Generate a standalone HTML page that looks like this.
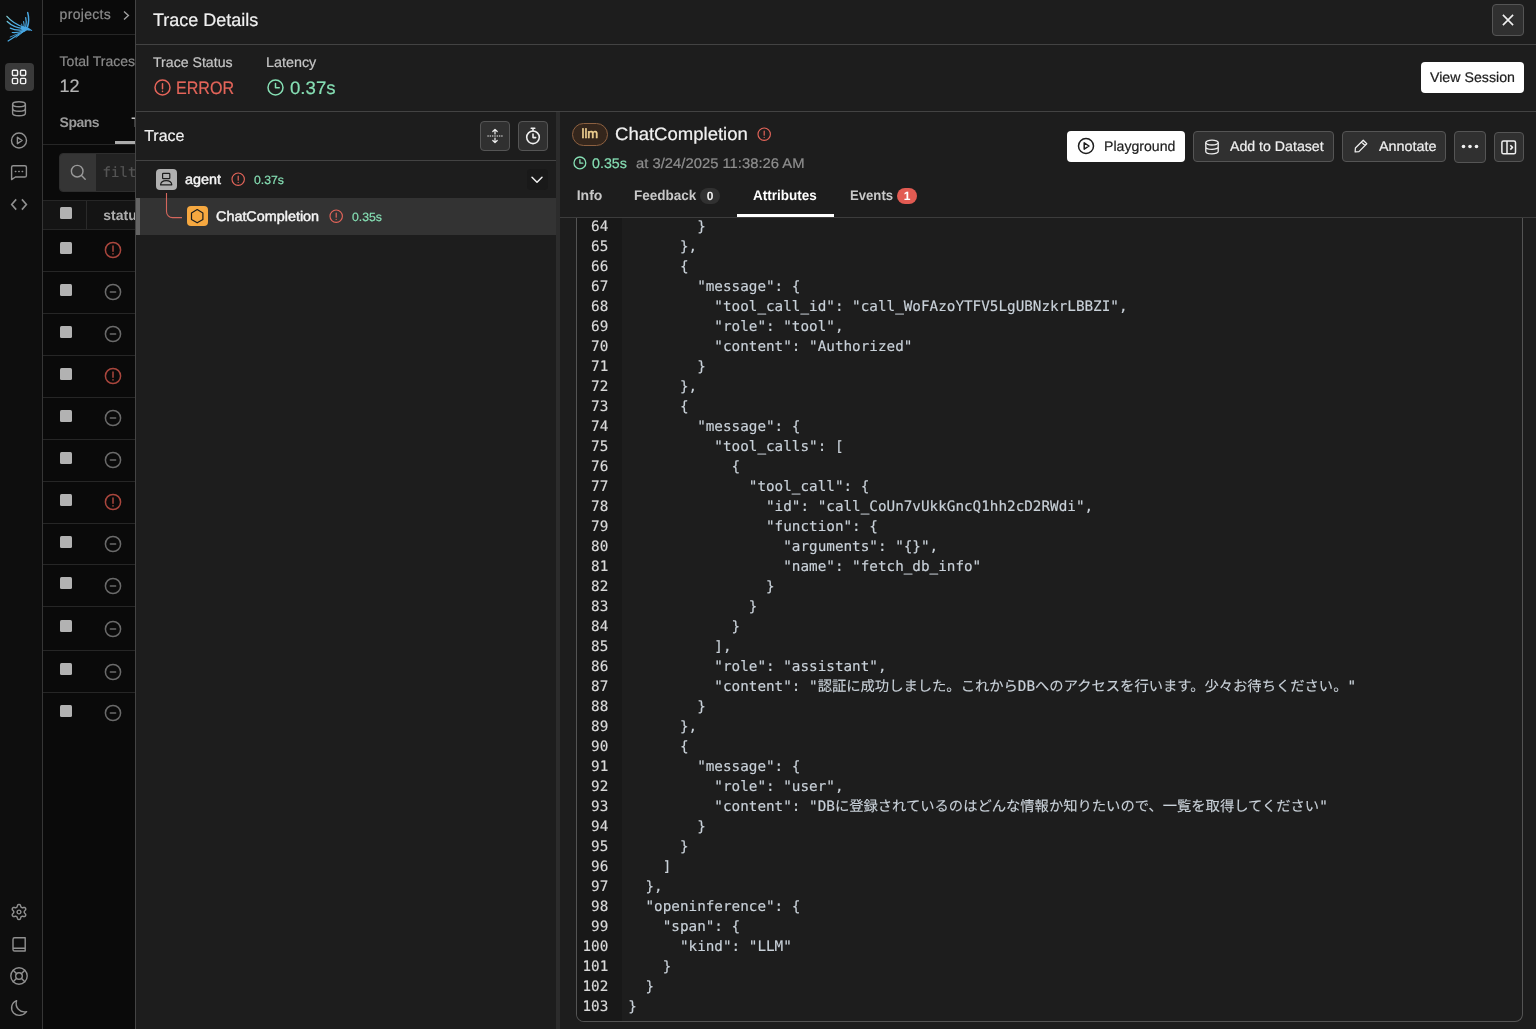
<!DOCTYPE html>
<html lang="en">
<head>
<meta charset="utf-8">
<title>Trace Details</title>
<style>
*{box-sizing:border-box;margin:0;padding:0}
html,body{width:1536px;height:1029px;overflow:hidden;background:#0a0a0a}
#main,#panel{will-change:transform}
body{text-rendering:geometricPrecision;position:relative;font-family:"Liberation Sans",sans-serif;font-size:14px;color:#eee;-webkit-font-smoothing:antialiased}
.abs{position:absolute}
.t{position:absolute;white-space:nowrap;line-height:1;-webkit-text-stroke:0.2px}
svg{position:absolute;overflow:visible}
/* sidebar */
#side{left:0;top:0;width:43px;height:1029px;background:#0e0e0e;border-right:1px solid #363636}
#navsel{left:5px;top:63px;width:29px;height:28px;border-radius:4px;background:#3a3a3a}
/* main dimmed */
#main{left:43px;top:0;width:92px;height:1029px;background:#0a0a0a;overflow:hidden}
.hl{position:absolute;height:1px;background:#262626}
.cb{position:absolute;left:17px;width:12px;height:12px;border-radius:1.5px;background:#b2b2b2}
/* panel */
#panel{left:135px;top:0;width:1401px;height:1029px;background:#1d1d1d;border-left:1px solid #444}
.pl{position:absolute;height:1px;background:#434343}
.btn{position:absolute;border:1px solid #555;background:#303030;border-radius:4px}
.btnw{position:absolute;background:#fff;border-radius:4px}
.mono{text-rendering:geometricPrecision;font-family:"DejaVu Sans Mono","Liberation Mono","Noto Sans CJK JP",monospace}
.cj{-webkit-text-stroke:0.12px;font-size:14.3px;letter-spacing:0}
</style>
</head>
<body>
<!-- SIDEBAR -->
<div id="side" class="abs"></div>
<div id="navsel" class="abs"></div>
<svg id="logo" style="left:0;top:0" width="43" height="50" viewBox="0 0 43 50">
<defs><linearGradient id="lg" x1="6" y1="14" x2="32" y2="34" gradientUnits="userSpaceOnUse"><stop offset="0" stop-color="#8fd6cf"/><stop offset=".35" stop-color="#4fb0e6"/><stop offset="1" stop-color="#3f9fe0"/></linearGradient></defs>
<g fill="none" stroke="url(#lg)" stroke-linecap="round">
<path d="M6.9 16.3Q13 23.4 23.4 27" stroke-width="1.25"/>
<path d="M7.2 21.5Q13 27.2 23 28.7" stroke-width="1.25"/>
<path d="M10.3 28.1Q15.6 30.8 23 29.9" stroke-width="1.2"/>
<path d="M12.2 32.5Q17 33 23 30.9" stroke-width="1.1"/>
<path d="M27.7 12.6Q29.7 19.6 27.5 27" stroke-width="1.5"/>
<path d="M25.7 17.6Q26.9 22.2 25.7 27.2" stroke-width="1.25"/>
<path d="M23.6 21.6Q24.5 24.6 23.8 27.4" stroke-width="1.1"/>
<path d="M21.7 24.1Q22.4 25.8 22 27.5" stroke-width="0.9"/>
<path d="M24.6 30.6L8.1 41" stroke-width="1.2"/>
<path d="M20 32.8L10.2 37" stroke-width="0.8"/>
<path d="M22.6 32.4L16 37.4" stroke-width="0.9"/>
</g>
<g fill="url(#lg)" stroke="none">
<path d="M21.6 26.6C24.5 26 27.6 26.8 29.6 28.4L32.4 30.5L31.4 30.9L29.8 30.2L29.2 31L28 30.2C26.5 30.4 25.4 31 24.2 32L21 33L22.6 30.6L20.5 28.8Z"/>
</g></svg>
<svg style="left:0;top:56px" width="43" height="170" viewBox="0 56 43 170" fill="none" stroke-linecap="round" stroke-linejoin="round">
<g stroke="#f2f2f2" stroke-width="1.4">
<rect x="12.4" y="70.3" width="5.2" height="5.2" rx="1"/><rect x="20.5" y="70.3" width="5.2" height="5.2" rx="1"/>
<rect x="12.4" y="78.4" width="5.2" height="5.2" rx="1"/><rect x="20.5" y="78.4" width="5.2" height="5.2" rx="1"/>
</g>
<g stroke="#909090" stroke-width="1.4">
<ellipse cx="19" cy="104.3" rx="6.4" ry="2.5"/>
<path d="M12.6 104.3V113.3C12.6 114.7 15.4 115.8 19 115.8S25.4 114.7 25.4 113.3V104.3"/>
<path d="M12.6 108.8C12.6 110.2 15.4 111.3 19 111.3S25.4 110.2 25.4 108.8"/>
<circle cx="19" cy="140.5" r="7.5"/>
<path d="M17.4 137.3L22.1 140.5L17.4 143.7Z"/>
<path d="M13.2 165.7H24.8A1.6 1.6 0 0 1 26.4 167.3V175.4A1.6 1.6 0 0 1 24.8 177H15.4L11.6 179.6V167.3A1.6 1.6 0 0 1 13.2 165.7Z"/>
<path d="M15.3 171.5H15.9M18.7 171.5H19.3M22.1 171.5H22.7" stroke-width="1.3"/>
<path d="M16.2 199.4L11.7 204.5L16.2 209.6M21.9 199.4L26.4 204.5L21.9 209.6" stroke-width="1.6" stroke-linecap="butt" stroke-linejoin="miter"/>
</g></svg>
<svg style="left:0;top:896px" width="43" height="133" viewBox="0 896 43 133" fill="none" stroke="#909090" stroke-width="1.4" stroke-linecap="round" stroke-linejoin="round">
<g transform="translate(19 912)"><path d="M0.00 -7.55 L0.49 -7.48 L0.96 -7.26 L1.37 -6.89 L1.64 -6.13 L1.82 -5.37 L2.06 -4.97 L2.30 -4.67 L2.57 -4.46 L2.89 -4.33 L3.27 -4.26 L3.74 -4.27 L4.49 -4.49 L5.28 -4.63 L5.81 -4.46 L6.23 -4.16 L6.54 -3.78 L6.72 -3.31 L6.77 -2.80 L6.65 -2.26 L6.13 -1.64 L5.57 -1.11 L5.33 -0.70 L5.19 -0.34 L5.15 -0.00 L5.19 0.34 L5.33 0.70 L5.57 1.11 L6.13 1.64 L6.65 2.26 L6.77 2.80 L6.72 3.31 L6.54 3.77 L6.23 4.16 L5.81 4.46 L5.28 4.63 L4.49 4.49 L3.74 4.27 L3.27 4.26 L2.89 4.33 L2.57 4.46 L2.30 4.67 L2.06 4.97 L1.82 5.37 L1.64 6.13 L1.37 6.89 L0.96 7.26 L0.49 7.48 L0.00 7.55 L-0.49 7.48 L-0.96 7.26 L-1.37 6.89 L-1.64 6.13 L-1.82 5.37 L-2.06 4.97 L-2.30 4.67 L-2.57 4.46 L-2.89 4.33 L-3.27 4.26 L-3.74 4.27 L-4.49 4.49 L-5.28 4.63 L-5.81 4.46 L-6.23 4.16 L-6.54 3.78 L-6.72 3.31 L-6.77 2.80 L-6.65 2.26 L-6.13 1.64 L-5.57 1.11 L-5.33 0.70 L-5.19 0.34 L-5.15 0.00 L-5.19 -0.34 L-5.33 -0.70 L-5.57 -1.11 L-6.13 -1.64 L-6.65 -2.26 L-6.77 -2.80 L-6.72 -3.31 L-6.54 -3.78 L-6.23 -4.16 L-5.81 -4.46 L-5.28 -4.63 L-4.49 -4.49 L-3.74 -4.27 L-3.27 -4.26 L-2.89 -4.33 L-2.58 -4.46 L-2.30 -4.67 L-2.06 -4.97 L-1.82 -5.37 L-1.64 -6.13 L-1.37 -6.89 L-0.96 -7.26 L-0.49 -7.48Z"/><circle r="1.9"/></g>
<path d="M14.6 937.8H25.2V951H14.6A1.6 1.6 0 0 1 13 949.4V939.4A1.6 1.6 0 0 1 14.6 937.8ZM13 948.2H25.2"/>
<circle cx="19" cy="976" r="8.2"/><circle cx="19" cy="976" r="3.3"/>
<path d="M13.2 970.2L16.7 973.7M24.8 970.2L21.3 973.7M13.2 981.8L16.7 978.3M24.8 981.8L21.3 978.3"/>
<path d="M16.6 1000.6C11.4 1002.6 10 1009 13.6 1013C17 1016.6 23.2 1016 26.6 1011.6C20 1013.2 14.6 1007.6 16.6 1000.6Z"/>
</svg>
<!-- MAIN -->
<div id="main" class="abs">
<span class="t" id="m_proj" style="left:16.6px;top:7.2px;font-size:14px;color:#8c8c8c;letter-spacing:0.3px">projects</span>
<svg style="left:79.5px;top:10.5px" width="7" height="9" viewBox="0 0 7 9" fill="none" stroke="#a0a0a0" stroke-width="1.4"><path d="M1 0.6L5.4 4.5L1 8.4"/></svg>
<div class="hl" style="left:0;top:34px;width:92px"></div>
<span class="t" id="m_tt" style="left:16.6px;top:54px;font-size:14px;color:#8a8a8a">Total Traces</span>
<span class="t" id="m_12" style="left:16.6px;top:77px;font-size:18px;color:#b4b4b4">12</span>
<span class="t" id="m_spans" style="left:16.6px;top:115.1px;font-size:14px;font-weight:700;color:#9a9a9a;letter-spacing:-0.5px;-webkit-text-stroke:0">Spans</span>
<span class="t" id="m_traces" style="left:88.4px;top:115.1px;font-size:14px;font-weight:700;color:#c4c4c4;-webkit-text-stroke:0">Traces</span>
<div class="abs" style="left:72px;top:141px;width:30px;height:3px;background:#ababab"></div>
<div class="hl" style="left:0;top:144px;width:92px"></div>
<div class="abs" style="left:16px;top:153px;width:120px;height:39px;border-radius:4px;background:#222;overflow:hidden;border:1px solid #2e2e2e"><div class="abs" style="left:-1px;top:-1px;width:36.6px;height:39px;background:#353535"></div></div>
<svg style="left:27px;top:164px" width="17" height="17" viewBox="0 0 17 17" fill="none" stroke="#9a9a9a" stroke-width="1.4" stroke-linecap="round"><circle cx="7.2" cy="7.2" r="5.8"/><path d="M11.5 11.5L15.2 15.2"/></svg>
<span class="t mono" id="m_filt" style="left:59.6px;top:166px;font-size:14px;color:#555">filter condition</span>
<div class="hl" style="left:0;top:200px;width:92px"></div>
<div class="abs" style="left:0;top:201px;width:92px;height:28px;background:#141414"></div>
<div class="abs" style="left:43px;top:201px;width:1px;height:28px;background:#2a2a2a"></div>
<div class="hl" style="left:0;top:229px;width:92px"></div>
<div class="cb" style="top:207px"></div>
<span class="t" id="m_status" style="left:60.3px;top:208.3px;font-size:14px;font-weight:700;color:#adadad;-webkit-text-stroke:0">status</span>
<div class="cb" style="top:242.2px"></div><svg style="left:61.1px;top:241.3px" width="18" height="18" viewBox="-9 -9 18 18" fill="none" stroke="#a9463d" stroke-width="1.5" stroke-linecap="round"><circle r="7.6"/><path d="M0 -3.9V1.3M0 3.8V3.9"/></svg><div class="hl" style="left:0;top:271px;width:92px"></div>
<div class="cb" style="top:284.1px"></div><svg style="left:61.1px;top:283.2px" width="18" height="18" viewBox="-9 -9 18 18" fill="none" stroke="#6a6a6a" stroke-width="1.5" stroke-linecap="round"><circle r="7.6"/><path d="M-2.7 0H2.7" stroke-width="1.3"/></svg><div class="hl" style="left:0;top:313px;width:92px"></div>
<div class="cb" style="top:326.0px"></div><svg style="left:61.1px;top:325.1px" width="18" height="18" viewBox="-9 -9 18 18" fill="none" stroke="#6a6a6a" stroke-width="1.5" stroke-linecap="round"><circle r="7.6"/><path d="M-2.7 0H2.7" stroke-width="1.3"/></svg><div class="hl" style="left:0;top:355px;width:92px"></div>
<div class="cb" style="top:367.9px"></div><svg style="left:61.1px;top:367.0px" width="18" height="18" viewBox="-9 -9 18 18" fill="none" stroke="#a9463d" stroke-width="1.5" stroke-linecap="round"><circle r="7.6"/><path d="M0 -3.9V1.3M0 3.8V3.9"/></svg><div class="hl" style="left:0;top:397px;width:92px"></div>
<div class="cb" style="top:409.8px"></div><svg style="left:61.1px;top:408.9px" width="18" height="18" viewBox="-9 -9 18 18" fill="none" stroke="#6a6a6a" stroke-width="1.5" stroke-linecap="round"><circle r="7.6"/><path d="M-2.7 0H2.7" stroke-width="1.3"/></svg><div class="hl" style="left:0;top:439px;width:92px"></div>
<div class="cb" style="top:451.7px"></div><svg style="left:61.1px;top:450.8px" width="18" height="18" viewBox="-9 -9 18 18" fill="none" stroke="#6a6a6a" stroke-width="1.5" stroke-linecap="round"><circle r="7.6"/><path d="M-2.7 0H2.7" stroke-width="1.3"/></svg><div class="hl" style="left:0;top:481px;width:92px"></div>
<div class="cb" style="top:493.6px"></div><svg style="left:61.1px;top:492.7px" width="18" height="18" viewBox="-9 -9 18 18" fill="none" stroke="#a9463d" stroke-width="1.5" stroke-linecap="round"><circle r="7.6"/><path d="M0 -3.9V1.3M0 3.8V3.9"/></svg><div class="hl" style="left:0;top:523px;width:92px"></div>
<div class="cb" style="top:535.5px"></div><svg style="left:61.1px;top:534.6px" width="18" height="18" viewBox="-9 -9 18 18" fill="none" stroke="#6a6a6a" stroke-width="1.5" stroke-linecap="round"><circle r="7.6"/><path d="M-2.7 0H2.7" stroke-width="1.3"/></svg><div class="hl" style="left:0;top:564px;width:92px"></div>
<div class="cb" style="top:577.4px"></div><svg style="left:61.1px;top:576.5px" width="18" height="18" viewBox="-9 -9 18 18" fill="none" stroke="#6a6a6a" stroke-width="1.5" stroke-linecap="round"><circle r="7.6"/><path d="M-2.7 0H2.7" stroke-width="1.3"/></svg><div class="hl" style="left:0;top:606px;width:92px"></div>
<div class="cb" style="top:620.3px"></div><svg style="left:61.1px;top:619.5px" width="18" height="18" viewBox="-9 -9 18 18" fill="none" stroke="#6a6a6a" stroke-width="1.5" stroke-linecap="round"><circle r="7.6"/><path d="M-2.7 0H2.7" stroke-width="1.3"/></svg><div class="hl" style="left:0;top:650px;width:92px"></div>
<div class="cb" style="top:663.4px"></div><svg style="left:61.1px;top:662.5px" width="18" height="18" viewBox="-9 -9 18 18" fill="none" stroke="#6a6a6a" stroke-width="1.5" stroke-linecap="round"><circle r="7.6"/><path d="M-2.7 0H2.7" stroke-width="1.3"/></svg><div class="hl" style="left:0;top:692px;width:92px"></div>
<div class="cb" style="top:705.3px"></div><svg style="left:61.1px;top:704.4px" width="18" height="18" viewBox="-9 -9 18 18" fill="none" stroke="#6a6a6a" stroke-width="1.5" stroke-linecap="round"><circle r="7.6"/><path d="M-2.7 0H2.7" stroke-width="1.3"/></svg>
</div>
<!-- PANEL -->
<div id="panel" class="abs">
<span class="t" id="p_title" style="left:17.0px;top:10.9px;font-size:18px;color:#f0f0f0;">Trace Details</span>
<div class="btn" style="left:1356px;top:4px;width:32px;height:32px"></div>
<svg style="left:1366px;top:14px" width="12" height="12" viewBox="0 0 12 12" fill="none" stroke="#f0f0f0" stroke-width="1.6"><path d="M0.9 0.9L11.1 11.1M11.1 0.9L0.9 11.1"/></svg>
<div class="pl" style="left:0;top:44px;width:1400px"></div>
<span class="t" id="p_ts" style="left:17.0px;top:55.2px;font-size:14px;color:#c6c6c6;transform:scaleX(1.009);transform-origin:0 0;">Trace Status</span>
<svg style="left:16.6px;top:78.3px" width="19.0" height="19.0" viewBox="-9.5 -9.5 19.0 19.0" fill="none" stroke="#e5655a" stroke-width="1.5" stroke-linecap="round"><circle r="7.5"/><path d="M0 -3.75V1.28M0 3.75V3.90"/></svg>
<span class="t" id="p_error" style="left:39.6px;top:78.9px;font-size:18px;color:#e5655a;transform:scaleX(0.894);transform-origin:0 0;">ERROR</span>
<span class="t" id="p_lat" style="left:129.8px;top:55.2px;font-size:14px;color:#c6c6c6;transform:scaleX(1.025);transform-origin:0 0;">Latency</span>
<svg style="left:130.0px;top:78.3px" width="19.0" height="19.0" viewBox="-9.5 -9.5 19.0 19.0" fill="none" stroke="#86dfb4" stroke-width="1.5" stroke-linecap="round" stroke-linejoin="round"><circle r="7.5"/><path d="M0 -4.12V0.3H3.75"/></svg>
<span class="t" id="p_037" style="left:154.1px;top:78.9px;font-size:18px;color:#86dfb4;transform:scaleX(1.035);transform-origin:0 0;">0.37s</span>
<div class="btnw" style="left:1284.5px;top:62.2px;width:103.3px;height:30.6px"></div>
<span class="t" id="p_vs" style="left:1294.0px;top:70.3px;font-size:14px;color:#1d1d1d;transform:scaleX(1.014);transform-origin:0 0;">View Session</span>
<div class="pl" style="left:0;top:111px;width:1400px"></div>
<span class="t" id="p_trace" style="left:8.2px;top:129.0px;font-size:16px;color:#f0f0f0;">Trace</span>
<div class="btn" style="left:344px;top:121px;width:30px;height:30px"></div>
<div class="btn" style="left:382px;top:121px;width:30px;height:30px"></div>
<svg style="left:351px;top:128px" width="16" height="16" viewBox="0 0 16 16" fill="none" stroke="#f0f0f0" stroke-width="1.2" stroke-linecap="round" stroke-linejoin="round"><path d="M8 1.6V5.9M5.8 3.5L8 1.3L10.2 3.5M8 14.4V10.1M5.8 12.5L8 14.7L10.2 12.5"/><path d="M0.4 8H15.8" stroke-dasharray="1.4 0.9" stroke-linecap="butt"/></svg>
<svg style="left:389px;top:126.6px" width="16" height="18" viewBox="0 0 16 18" fill="none" stroke="#f0f0f0" stroke-width="1.55" stroke-linecap="round" stroke-linejoin="round"><circle cx="8" cy="10.3" r="6.3"/><path d="M8 7V10.6H10.7M6.2 1.2H9.8M8 1.4V3.8"/></svg>
<div class="pl" style="left:0;top:160px;width:420px"></div>
<div class="abs" style="left:0;top:198px;width:420px;height:37px;background:#333"></div>
<div class="abs" style="left:0;top:198px;width:4px;height:37px;background:#646464"></div>
<svg style="left:25px;top:190px" width="24" height="32" viewBox="0 0 24 32" fill="none" stroke="#d4665c" stroke-width="1.1"><path d="M5.5 3V21.6A6 6 0 0 0 11.5 27.6H21"/></svg>
<div class="abs" style="left:20.3px;top:169.3px;width:20.4px;height:20.4px;border-radius:4px;background:#b0b0b0"></div>
<svg style="left:20.3px;top:169.3px" width="20.4" height="20.4" viewBox="0 0 20.4 20.4" fill="none" stroke="#1d1d1d" stroke-width="1.2" stroke-linejoin="round"><rect x="6.6" y="4.3" width="7.2" height="5.4" rx="0.8"/><path d="M4.6 15.9C4.8 13 7 11.6 10.2 11.6S15.6 13 15.8 15.9Z"/></svg>
<span class="t" id="t_agent" style="left:49.0px;top:171.8px;font-size:14px;color:#f4f4f4;transform:scaleX(1.025);transform-origin:0 0;-webkit-text-stroke:0.45px #f4f4f4">agent</span>
<svg style="left:93.7px;top:171.1px" width="16.4" height="16.4" viewBox="-8.2 -8.2 16.4 16.4" fill="none" stroke="#e5655a" stroke-width="1.15" stroke-linecap="round"><circle r="6.2"/><path d="M0 -3.10V1.05M0 3.10V3.22"/></svg>
<span class="t" id="t_037" style="left:118.2px;top:174.1px;font-size:12px;color:#86dfb4;transform:scaleX(1.021);transform-origin:0 0;">0.37s</span>
<div class="abs" style="left:390.8px;top:169px;width:21px;height:21px;border-radius:4px;background:#191919"></div>
<svg style="left:395.3px;top:175.5px" width="12" height="8" viewBox="0 0 12 8" fill="none" stroke="#f0f0f0" stroke-width="1.5" stroke-linecap="round" stroke-linejoin="round"><path d="M1 1.3L6 6.2L11 1.3"/></svg>
<div class="abs" style="left:51.2px;top:206px;width:20.4px;height:20.4px;border-radius:4px;background:#f6a840"></div>
<svg style="left:51.2px;top:206px" width="20.4" height="20.4" viewBox="0 0 20.4 20.4" fill="none" stroke="#1d1d1d" stroke-width="1.2" stroke-linejoin="round"><path d="M10.2 3.6L15.9 6.9V13.5L10.2 16.8L4.5 13.5V6.9Z"/></svg>
<span class="t" id="t_cc" style="left:79.6px;top:208.8px;font-size:14px;color:#f4f4f4;transform:scaleX(1.027);transform-origin:0 0;-webkit-text-stroke:0.45px #f4f4f4">ChatCompletion</span>
<svg style="left:191.7px;top:207.8px" width="16.4" height="16.4" viewBox="-8.2 -8.2 16.4 16.4" fill="none" stroke="#e5655a" stroke-width="1.15" stroke-linecap="round"><circle r="6.2"/><path d="M0 -3.10V1.05M0 3.10V3.22"/></svg>
<span class="t" id="t_035" style="left:216.2px;top:210.8px;font-size:12px;color:#86dfb4;transform:scaleX(1.021);transform-origin:0 0;">0.35s</span>
<div class="abs" style="left:420px;top:112px;width:4px;height:917px;background:#2c2c2c"></div>
<!-- RIGHT -->
<div class="abs" style="left:436px;top:123px;width:36px;height:23px;border-radius:12px;border:1px solid #8c6040;background:#34261c"></div>
<span class="t" id="r_llm" style="left:445.6px;top:126.8px;font-size:13px;color:#f0d192;transform:scaleX(1.0);transform-origin:0 0;-webkit-text-stroke:0.5px #f0d192">llm</span>
<span class="t" id="r_title" style="left:479.2px;top:125.0px;font-size:18px;color:#f0f0f0;transform:scaleX(1.029);transform-origin:0 0;">ChatCompletion</span>
<svg style="left:620.2px;top:126.2px" width="16.4" height="16.4" viewBox="-8.2 -8.2 16.4 16.4" fill="none" stroke="#e5655a" stroke-width="1.15" stroke-linecap="round"><circle r="6.2"/><path d="M0 -3.10V1.05M0 3.10V3.22"/></svg>
<svg style="left:436.3px;top:155.3px" width="15.8" height="15.8" viewBox="-7.9 -7.9 15.8 15.8" fill="none" stroke="#86dfb4" stroke-width="1.3" stroke-linecap="round" stroke-linejoin="round"><circle r="5.9"/><path d="M0 -3.25V0.3H2.95"/></svg>
<span class="t" id="r_035" style="left:456.1px;top:155.9px;font-size:14px;color:#86dfb4;transform:scaleX(1.02);transform-origin:0 0;">0.35s</span>
<span class="t" id="r_at" style="left:499.6px;top:155.9px;font-size:14px;color:#8f8f8f;transform:scaleX(1.058);transform-origin:0 0;">at 3/24/2025 11:38:26 AM</span>
<div class="btnw" style="left:930.8px;top:131.2px;width:118.4px;height:30.5px"></div>
<svg style="left:940.8px;top:137.4px" width="18" height="18" viewBox="-9 -9 18 18" fill="none" stroke="#1d1d1d" stroke-width="1.5" stroke-linejoin="round"><circle r="7.5"/><path d="M-1.8 -3.2L3 0L-1.8 3.2Z"/></svg>
<span class="t" id="b_pg" style="left:968.2px;top:139.0px;font-size:14px;color:#1d1d1d;transform:scaleX(1.008);transform-origin:0 0;">Playground</span>
<div class="btn" style="left:1057px;top:131px;width:141px;height:31px"></div>
<svg style="left:1068px;top:138.5px" width="16" height="16" viewBox="0 0 16 16" fill="none" stroke="#f0f0f0" stroke-width="1.3"><ellipse cx="8" cy="3.6" rx="6.2" ry="2.4"/><path d="M1.8 3.6V12.4C1.8 13.7 4.6 14.8 8 14.8S14.2 13.7 14.2 12.4V3.6M1.8 8C1.8 9.3 4.6 10.4 8 10.4S14.2 9.3 14.2 8"/></svg>
<span class="t" id="b_add" style="left:1094.2px;top:139.0px;font-size:14px;color:#f0f0f0;transform:scaleX(1.011);transform-origin:0 0;">Add to Dataset</span>
<div class="btn" style="left:1206px;top:131px;width:104px;height:31px"></div>
<svg style="left:1217.6px;top:139.4px" width="14" height="14" viewBox="0 0 15 15" fill="none" stroke="#f0f0f0" stroke-width="1.3" stroke-linejoin="round"><path d="M9.9 1.3L13.7 5.1L5.3 13.5L1.2 13.8L1.5 9.7ZM8 3.2L11.8 7"/></svg>
<span class="t" id="b_ann" style="left:1243.2px;top:139.0px;font-size:14px;color:#f0f0f0;transform:scaleX(1.027);transform-origin:0 0;">Annotate</span>
<div class="btn" style="left:1318px;top:130.5px;width:32px;height:32px"></div>
<svg style="left:1325px;top:144px" width="18" height="5" viewBox="0 0 18 5" fill="#f0f0f0"><circle cx="2.5" cy="2.5" r="1.8"/><circle cx="9" cy="2.5" r="1.8"/><circle cx="15.5" cy="2.5" r="1.8"/></svg>
<div class="btn" style="left:1358px;top:132px;width:30px;height:30px"></div>
<svg style="left:1365.3px;top:139.5px" width="16" height="16" viewBox="0 0 16 16" fill="none" stroke="#f0f0f0" stroke-width="1.5" stroke-linejoin="round"><rect x="0.9" y="1" width="13.6" height="12.8" rx="1.6"/><path d="M6 1V13.8M9.3 5.2L11.5 7.4L9.3 9.6"/></svg>
<span class="t" id="tab_info" style="left:440.7px;top:188.2px;font-size:14px;color:#c8c8c8;font-weight:700;-webkit-text-stroke:0">Info</span>
<span class="t" id="tab_fb" style="left:498.2px;top:188.2px;font-size:14px;color:#c8c8c8;transform:scaleX(0.966);transform-origin:0 0;font-weight:700;-webkit-text-stroke:0">Feedback</span>
<div class="abs" style="left:564.3px;top:188px;width:20px;height:16.3px;border-radius:8.2px;background:#313131"></div>
<span class="t" id="tab_fb0" style="left:570.8px;top:190.2px;font-size:12px;color:#f0f0f0;font-weight:700;-webkit-text-stroke:0">0</span>
<span class="t" id="tab_attr" style="left:617.4px;top:188.2px;font-size:14px;color:#ffffff;transform:scaleX(0.965);transform-origin:0 0;font-weight:700;-webkit-text-stroke:0">Attributes</span>
<div class="abs" style="left:601px;top:214px;width:97px;height:3px;background:#fff"></div>
<span class="t" id="tab_ev" style="left:713.6px;top:188.2px;font-size:14px;color:#c8c8c8;transform:scaleX(0.938);transform-origin:0 0;font-weight:700;-webkit-text-stroke:0">Events</span>
<div class="abs" style="left:761.2px;top:188px;width:20px;height:16.3px;border-radius:8.2px;background:#e25b52"></div>
<span class="t" id="tab_ev1" style="left:767.7px;top:190.2px;font-size:12px;color:#ffffff;font-weight:700;-webkit-text-stroke:0">1</span>
<div class="pl" style="left:424px;top:217px;width:976px;background:#3c3c3c"></div>
<div class="abs" style="left:440px;top:218px;width:947.4px;height:804px;border:1px solid #545454;border-top:none;border-radius:0 0 8px 8px;overflow:hidden">
<div class="abs" style="left:0;top:0;width:44.5px;height:822px;background:#181818"></div>
<pre class="abs mono" id="gut" style="left:0.1px;top:-0.9px;width:31.2px;text-align:right;font-size:14.3px;letter-spacing:0.0000px;line-height:20.0000px;transform:scaleY(1.0);transform-origin:0 0;color:#dadada;-webkit-text-stroke:0.15px #dadada">64
65
66
67
68
69
70
71
72
73
74
75
76
77
78
79
80
81
82
83
84
85
86
87
88
89
90
91
92
93
94
95
96
97
98
99
100
101
102
103</pre>
<pre class="abs mono" id="code" style="left:51.3px;top:-0.9px;font-size:14.3px;letter-spacing:0.0000px;line-height:20.0000px;transform:scaleY(1.0);transform-origin:0 0;color:#c9d1d9;-webkit-text-stroke:0.15px #c9d1d9">        }
      },
      {
        "message": {
          "tool_call_id": "call_WoFAzoYTFV5LgUBNzkrLBBZI",
          "role": "tool",
          "content": "Authorized"
        }
      },
      {
        "message": {
          "tool_calls": [
            {
              "tool_call": {
                "id": "call_CoUn7vUkkGncQ1hh2cD2RWdi",
                "function": {
                  "arguments": "{}",
                  "name": "fetch_db_info"
                }
              }
            }
          ],
          "role": "assistant",
          "content": "<span class="cj">認証に成功しました。これから</span>DB<span class="cj">へのアクセスを行います。少々お待ちください。</span>"
        }
      },
      {
        "message": {
          "role": "user",
          "content": "DB<span class="cj">に登録されているのはどんな情報か知りたいので、一覧を取得してください</span>"
        }
      }
    ]
  },
  "openinference": {
    "span": {
      "kind": "LLM"
    }
  }
}</pre>
</div>
</div>
</body>
</html>
